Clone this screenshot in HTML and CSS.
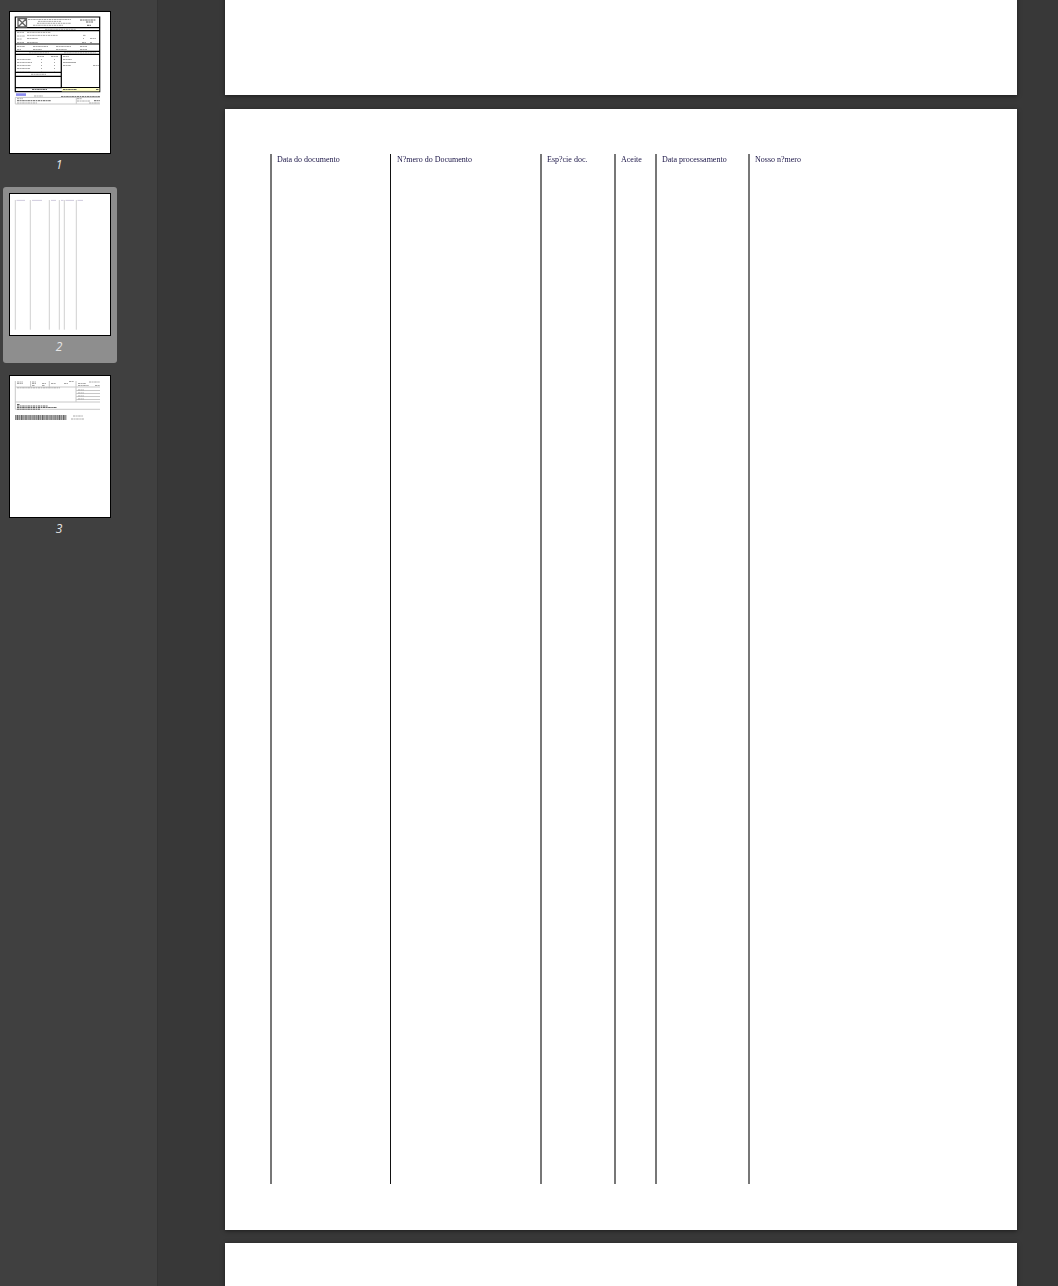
FILE: index.html
```html
<!DOCTYPE html>
<html lang="en">
<head>
    <meta charset="UTF-8">
    <title>Boleto</title>
    <link rel="stylesheet" href="styles.css">
</head>
<body>
    <div class="sidebar">
        <div class="thumb-item">
            <div class="thumb">
                <svg viewBox="0 0 100 141">
                    <!-- form boxes -->
                    <path class="box" d="M5.3 5V79.7H89.7V5ZM5.3 15.7H89.7M5.3 18.7H89.7M5.3 32H89.7M5.3 39.3H89.7M5.3 42.3H89.7M5.3 60.3H51.3M5.3 64.3H51.3M5.3 75.7H89.7M51.3 42.3V75.7"/>
                    <rect class="yellow" x="51.8" y="76" width="37.6" height="3.4"/>
                    <!-- logo placeholder -->
                    <path class="logo" d="M8 6.5H16.5V15H8ZM8 6.5L16.5 15M16.5 6.5L8 15"/>
                    <!-- header text -->
                    <path class="txt" d="M18 7.5H61M28 9.4H51M27 11.3H61M23 13.3H53"/>
                    <path class="txt dark" d="M70 8H86M76 10H83M77 13.3H81"/>
                    <path class="txt" d="M35 17.2H66"/>
                    <path class="txt" d="M7 20.4H14M17 20.4H41M7 24H15M17 23.4H48M7 27H12M17 26.5H28M7 30.5H14M17 30.5H28"/>
                    <path class="txt" d="M73 23.4H76M73 26.5H74M80 26.5H86M72 30.5H76M80 30.5H82"/>
                    <path class="txt" d="M7 34.5H15M23 34.5H38M46 34.5H61M70 34.5H77M7 37.5H11M23 37.5H32M46 37.5H57M70 37.5H77"/>
                    <path class="txt" d="M19 41H39M54 41H86"/>
                    <path class="txt" d="M27 44.5H34M41 44.5H48M7 47.5H21M31 47.5H32M44 47.5H45M7 50.5H22M31 50.5H32M44 50.5H45M7 53.5H21M31 53.5H32M44 53.5H45M7 56.5H20M31 56.5H32M44 56.5H45M7 59.5H21M31 59.5H32M44 59.5H45M21 62.3H36"/>
                    <path class="txt" d="M53 44.5H59M53 47.5H62M53 50.5H66M53 50.5H66M53 53.5H61M83 53.5H89"/>
                    <path class="txt dark" d="M22 77.5H37M53 77.5H67M86 77.5H89"/>
                    <!-- lower block -->
                    <rect class="blue" x="6" y="81.3" width="10" height="2.6"/>
                    <path class="txt" d="M24 84H33"/>
                    <path class="txt dark" d="M51 84.6H90"/>
                    <path class="rule" d="M5.3 85.4H90M5.3 92H90M66.3 85.4V92M5.3 85.4V92"/>
                    <path class="txt" d="M7 86.7H13M67 86.7H72M67 89H80M7 91H27M79 91H90"/>
                    <path class="txt dark" d="M7 88.7H41M84 88.7H90"/>
                </svg>
            </div>
            <div class="thumb-label">1</div>
        </div>
        <div class="thumb-item selected">
            <div class="thumb">
                <svg viewBox="0 0 100 141">
                    <path class="col" d="M5.3 6V135.7M20.3 6V135.7M39.3 6V135.7M49.3 6V135.7M54.3 6V135.7M66.3 6V135.7"/>
                    <path class="head" d="M6.5 6.4H15M22 6.4H32M41 6.4H46M51 6.4H53.5M55.5 6.4H64M67.5 6.4H73"/>
                </svg>
            </div>
            <div class="thumb-label">2</div>
        </div>
        <div class="thumb-item">
            <div class="thumb">
                <svg viewBox="0 0 100 141">
                    <path class="rule" d="M5.3 5V33.3H90M5.3 11H90M20.6 5V11M39.3 5V11M66 5V26M5.3 26H90M66 14.5H90M66 17.5H90M66 20.5H90M66 23.5H90"/>
                    <path class="txt" d="M7 6H13M22 6H26M59 5.5H64M79 6H90M22 9.5H25M32 9.5H35M85 9.5H90"/>
                    <path class="txt" d="M7 7.5H13M22 7.5H26M32 7.5H36M41 7.5H46M54 7.5H58M68 7.5H76M7 11.8H50M68 14H74M68 17H74M68 20H74M68 23H74M68 9.5H79"/>
                    <path class="txt dark" d="M7 28.5H10M7 30H38M7 31.5H47M7 33.2H30"/>
                    <line class="barcode" x1="5" y1="41.5" x2="56.7" y2="41.5"/>
                    <path class="txt" d="M63 40H73M61 43H74"/>
                </svg>
            </div>
            <div class="thumb-label">3</div>
        </div>
    </div>

    <div class="viewer">
        <div class="pages">
            <div class="page"></div>
            <div class="page">
                <div class="columns">
                    <div class="column w-data">Data do documento</div>
                    <div class="column dark w-numero">N?mero do Documento</div>
                    <div class="column w-especie">Esp?cie doc.</div>
                    <div class="column w-aceite">Aceite</div>
                    <div class="column w-proc">Data processamento</div>
                    <div class="column">Nosso n?mero</div>
                </div>
            </div>
            <div class="page"></div>
        </div>
    </div>
</body>
</html>
```

FILE: styles.css
```css
html, body {
    height: 100%;
}
body {
    margin: 0;
    display: flex;
    height: 1286px;
    overflow: hidden;
    background-color: #383838;
}
.sidebar {
    width: 158px;
    flex: none;
    box-sizing: border-box;
    padding: 5px 0 0 3px;
    background-color: #404040;
    border-right: 1px solid #333;
}
.thumb-item {
    width: 114px;
    height: 176px;
    box-sizing: border-box;
    padding: 6px;
    margin-bottom: 6px;
    border-radius: 3px;
}
.thumb-item.selected {
    background-color: #8e8e8e;
}
.thumb {
    width: 100px;
    height: 141px;
    background-color: #fff;
    border: 1px solid #000;
}
.thumb svg {
    display: block;
    width: 100px;
    height: 141px;
    fill: none;
    filter: blur(0.5px);
}
.thumb-label {
    height: 20px;
    line-height: 22px;
    padding-right: 2px;
    text-align: center;
    font-family: "Open Sans", sans-serif;
    font-size: 12px;
    font-style: italic;
    color: #e6e6e6;
}

/* thumbnail drawings */
.box {
    stroke: #000;
    stroke-width: 1.2;
}
.yellow {
    fill: #ffffc8;
}
.logo {
    stroke: #666;
    stroke-width: 1.3;
}
.blue {
    fill: #8a8af0;
}
.rule {
    stroke: #c8c8c8;
    stroke-width: 1;
}
.txt {
    stroke: #a8a8a8;
    stroke-width: 1;
    stroke-dasharray: 2.5 0.6 1.5 0.6;
}
.txt.dark {
    stroke: #666;
}
.col {
    stroke: #d0d0d0;
    stroke-width: 1;
}
.head {
    stroke: #c4bfd4;
    stroke-width: 0.8;
}
.barcode {
    stroke: #555;
    stroke-width: 5;
    stroke-dasharray: 0.7 0.4 0.4 0.4 1 0.3 0.5 0.5;
}

.viewer {
    flex: 1;
    overflow: hidden;
}
.pages {
    width: 792px;
    margin: -1026px 0 0 67px;
}
.page {
    height: 1121px;
    background-color: #fff;
    margin-bottom: 13px;
    box-shadow: 0 1px 4px rgba(0, 0, 0, 0.5);
}
.page:first-child {
    margin-bottom: 14px;
}
.columns {
    display: flex;
    padding: 45px 0 0 45px;
    font-family: "Liberation Serif", serif;
    font-size: 8px;
    line-height: 11px;
    color: #1a1446;
    will-change: transform;
}
.column {
    height: 1030px;
    box-sizing: border-box;
    padding-left: 5px;
    border-left: 2px solid #777;
}
.column.dark {
    padding-left: 6px;
    border-left: 1px solid #111;
}
.w-data {
    width: 120px;
}
.w-numero {
    width: 150px;
}
.w-especie {
    width: 74px;
}
.w-aceite {
    width: 41px;
}
.w-proc {
    width: 93px;
}
```
